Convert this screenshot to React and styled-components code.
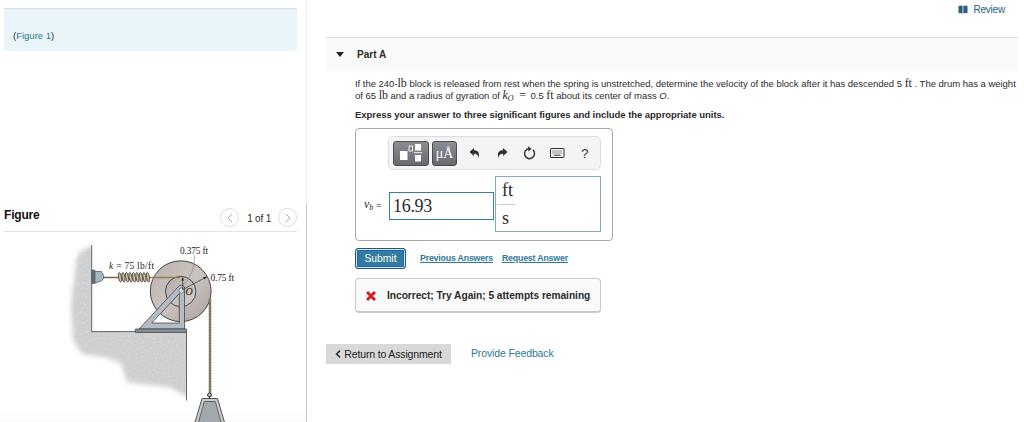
import React from "react";
import styled, { createGlobalStyle } from "styled-components";

const GlobalStyle = createGlobalStyle`
  * { box-sizing: border-box; }
  body { margin: 0; background: #fff; color: #2b2b2b; font-family: "Liberation Sans", Arial, sans-serif; font-size: 9.5px; overflow: hidden; }
`;
const Page = styled.div`display: flex; height: 422px; width: 1024px; overflow: hidden;`;
const Side = styled.aside`width: 307px; flex: none; display: flex; flex-direction: column;`;
const SideTop = styled.div`height: 204px; padding: 8px 9px 0 4px; border-right: 1px solid #ededf7;`;
const SideBottom = styled.div`height: 218px; padding: 0 9px 0 4px; border-right: 1px solid #b4c8da; background: linear-gradient(#fff 93%, #fafafa);`;
const Intro = styled.div`height: 43px; border-top: 1px solid #d9dfe1; background: #e9f5f8; padding: 21px 9px 0; line-height: 12px;`;
const Link = styled.a`color: #2f7896; cursor: pointer;`;
const FigureHead = styled.header`height: 28px; display: flex; align-items: center; justify-content: space-between; border-bottom: 1px solid #e4e4e4;`;
const FigureTitle = styled.h2`margin: 0; padding-bottom: 6px; font-size: 12px; letter-spacing: -0.2px; line-height: 14px; color: #111;`;
const Pager = styled.div`display: flex; align-items: center; gap: 7px; font-size: 10px; letter-spacing: -0.2px; span { padding: 2px 0 0 1px; }`;
const Round = styled.button`width: 19px; height: 19px; border: 1px solid #dedede; border-radius: 50%; background: #fff; padding: 0; display: grid; place-items: center;`;
const Drawing = styled.svg`display: block; margin-left: 56px; font-family: "Liberation Serif", serif;`;

const Main = styled.main`flex: 1; min-width: 0; padding: 0 6px 0 19px;`;
const TopBar = styled.div`height: 37px; display: flex; justify-content: flex-end; padding: 4px 13px 0 0; gap: 5px; color: #24617a; font-size: 10px; letter-spacing: -0.2px; line-height: 12px; svg { margin-top: 1px; }`;
const PartHead = styled.div`height: 34px; border-top: 1px solid #dcdcdc; background: #f9f9f9; display: flex; align-items: center; padding-left: 10px; gap: 13px; font-weight: bold; font-size: 10px; letter-spacing: 0.05px;`;
const Body = styled.section`padding: 7px 0 0 29px; height: 273px;`;
const Line = styled.div`height: ${p => p.$h || 12}px; line-height: 12px; white-space: nowrap; letter-spacing: ${p => p.$ls || 0}px; font-weight: ${p => p.$bold ? "bold" : "normal"};`;
const MathText = styled.span`font-family: "Liberation Serif", serif; font-size: ${p => p.$size || 12}px; line-height: 1px; font-style: ${p => p.$italic ? "italic" : "normal"}; sub { font-size: 8px; line-height: 0; vertical-align: -2px; }`;
const Equals = styled(MathText)`margin: 0 2px 0 3px;`;
const AnswerBox = styled.div`width: 258px; height: 113px; border: 1px solid #a8a8a8; border-radius: 4px; padding: 7px 11px 0 8px;`;
const Toolbar = styled.div`margin-left: 24px; width: 213px; height: 34px; border: 1px solid #dedede; border-radius: 5px; background: #f4f4f4; display: flex; align-items: center; padding: 0 0 0 4px;`;
const Tool = styled.button`width: ${p => p.$w}px; height: 25px; margin-right: ${p => p.$gap || 0}px; padding: 0; border: 1px solid #4b4c50; border-radius: 3px; background: linear-gradient(#8d8e93, #68696e); color: #fff; font: 14px/23px "Liberation Serif", serif; display: grid; place-items: center;`;
const PlainTool = styled.button`width: 27.5px; height: 24px; padding: 0; border: 0; background: none; display: grid; place-items: center; color: #303030; font: 13px "Liberation Sans", sans-serif;`;
const Entry = styled.div`display: flex; align-items: center; height: 56px; margin-top: 6px;`;
const Label = styled.div`width: 25px; white-space: nowrap; font-size: 9.5px; padding-top: 1px;`;
const ValueBox = styled.div`width: 105px; height: 28px; margin-top: 3px; border: 1px solid #38809c; padding-left: 3px; font: 18px/26px "Liberation Serif", serif; letter-spacing: -0.3px;`;
const UnitBox = styled.div`width: 106px; height: 56px; margin-left: 1px; border: 1px solid #7faec4; padding: 0 1px; font: 18px/27px "Liberation Serif", serif;`;
const Num = styled.div`width: 18px; height: 28px; border-bottom: 1px solid #c9c9c9; padding-left: 5px;`;
const Den = styled.div`padding-left: 5px; height: 26px; line-height: 26px;`;
const Actions = styled.div`display: flex; align-items: center; height: 22px; margin-top: 6px;`;
const Submit = styled.button`width: 51px; height: 21px; padding: 0; border: 1px solid #1f5a79; border-radius: 3px; background: #337c9c; box-shadow: inset 0 0 0 1px #d8e8f0, inset 0 0 0 2px #1e60c8; color: #fff; font: 10.3px/19px "Liberation Sans", sans-serif;`;
const ActionLink = styled(Link)`font-weight: bold; font-size: 8.8px; text-decoration: underline; margin-left: ${p => p.$ml}px; letter-spacing: -0.19px; line-height: 12px;`;
const Notice = styled.div`margin-top: 9px; width: 246px; height: 35px; border: 1px solid #c9c9c9; border-bottom-width: 2px; border-radius: 4px; background: #f9f9f9; display: flex; align-items: center; padding: 1px 0 0 10px; gap: 11px; font-size: 10.2px; letter-spacing: -0.03px; font-weight: bold; white-space: nowrap;`;
const Footer = styled.footer`display: flex; align-items: center; gap: 20px; height: 20px; font-size: 10.5px; letter-spacing: -0.13px; ${Link} { padding-bottom: 2px; }`;
const Return = styled.button`width: 125px; height: 20px; border: 0; background: #d8d8d8; padding: 0; display: flex; align-items: center; justify-content: center; gap: 3px; color: #222; font: 10.5px "Liberation Sans", sans-serif; letter-spacing: -0.15px; white-space: nowrap;`;

const Chevron = ({ right }) => (
  <svg width="8" height="10" viewBox="0 0 8 10"><path d={right ? "M2 1l4 4-4 4" : "M6 1L2 5l4 4"} fill="none" stroke="#aaa" strokeWidth="1" /></svg>
);

const coils = Array.from({ length: 9 }, (_, i) => 120 + i * 3.5);

function DrumFigure() {
  return (
    <Drawing width="190" height="190" viewBox="60 232 190 190">
      <defs>
        <filter id="soft" x="-20%" y="-20%" width="140%" height="140%"><feGaussianBlur stdDeviation="2.4" /></filter>
        <filter id="grain"><feTurbulence type="fractalNoise" baseFrequency="0.5" numOctaves="2" /><feColorMatrix values="0 0 0 0 1  0 0 0 0 1  0 0 0 0 1  0 1.6 0 0 -0.72" /><feComposite in2="SourceGraphic" operator="in" /></filter>
        <clipPath id="wallClip"><path d="M60 244H91.5V331.5H186.5V404H60Z" /></clipPath>
        <linearGradient id="metal" x1="0" y1="0" x2="1" y2="1"><stop offset="0" stopColor="#b9b1ad" /><stop offset=".5" stopColor="#cac3bf" /><stop offset="1" stopColor="#aaa29e" /></linearGradient>
        <linearGradient id="hub" x1="0" y1="0" x2="1" y2="1"><stop offset="0" stopColor="#b3aaa6" /><stop offset="1" stopColor="#d6d0cc" /></linearGradient>
      </defs>
      <g clipPath="url(#wallClip)">
        <path filter="url(#soft)" fill="#cdced0" d="M100 244L84 249L77 257L74 280L71 305L73 340L82 354L105 357L121 363L127 382L150 385L170 387L190 398V325H100Z" />
        <path filter="url(#grain)" opacity=".4" d="M91 250L80 255L76 300L76 345L120 360L130 380L170 384L186 390V331H91Z" />
      </g>
      <path d="M91.7 245V331.6H186.5V400.5" fill="none" stroke="#555" strokeWidth=".9" />
      <path d="M92 270h2.8v13.5H92z" fill="#66737f" stroke="#404850" strokeWidth=".6" />
      <path d="M95 271.5H101.5L104.3 277.3L101.5 281L95 283Z" fill="#a6b7c4" stroke="#45505a" strokeWidth=".7" />
      <path d="M103 277.5H120" stroke="#776639" strokeWidth="1.5" />
      <circle cx="180.7" cy="291.2" r="30.4" fill="url(#metal)" stroke="#494442" />
      <circle cx="180.7" cy="291.5" r="15.2" fill="url(#hub)" stroke="#494442" />
      <path d="M148 277.5H180" stroke="#92804c" strokeWidth="1.5" />
      {coils.map(x => <ellipse key={x} cx={x} cy="277.3" rx="1.4" ry="4.8" fill="#c9c2aa" stroke="#514c40" strokeWidth=".9" transform={`rotate(-9 ${x} 277.3)`} />)}
      <path d="M210 298V393" stroke="#655d45" strokeWidth="2.4" />
      <path d="M210 298V393" stroke="#b3aa89" strokeWidth="1" strokeDasharray="2 .7" />
      <path fillRule="evenodd" d="M139 329L178.5 286.5Q181.5 283.5 184.5 287V329ZM151.7 323H179.3V293.5Z" fill="#b3bcc4" stroke="#40464a" strokeWidth=".8" />
      <path d="M135.5 329H186.5V332.4H135.5Z" fill="#899296" stroke="#3d4548" strokeWidth=".8" />
      <circle cx="181.5" cy="290.5" r="2.6" fill="#d9e0e5" stroke="#555f66" strokeWidth=".7" />
      <path d="M194.2 255V264Q193 271 188 280Q186 283 183 284" fill="none" stroke="#8d8a88" strokeWidth=".7" />
      <path d="M182 290L205 277.7M182.7 289V280" stroke="#333" strokeWidth=".7" />
      <path d="M207.3 276.5L203.2 277.3L204.5 279.6ZM182.7 277L181.3 280.5H184.1Z" fill="#222" />
      <circle cx="209.5" cy="395" r="2" fill="#bbb" stroke="#333" strokeWidth="1" />
      <path d="M202 398.5H217.5L225 424H194.5Z" fill="#c5cbc9" stroke="#444" strokeWidth=".9" />
      <path d="M204.3 401.5H215.3L221.5 424H198Z" fill="#a3a8ad" stroke="#4d5153" strokeWidth=".8" />
      <path d="M209.5 396.5V399" stroke="#333" />
      <g fill="#222" fontSize="9.4">
        <text x="180" y="253.7" textLength="28">0.375 ft</text>
        <text x="109" y="268.7" textLength="45"><tspan fontStyle="italic">k</tspan> = 75 lb/ft</text>
        <text x="210.5" y="280.7" textLength="23.5">0.75 ft</text>
        <text x="185.5" y="295.3" fontStyle="italic" fontSize="10">O</text>
      </g>
    </Drawing>
  );
}

export default function App() {
  return (
    <><GlobalStyle />
      <Page>
        <Side>
          <SideTop><Intro>(<Link>Figure 1</Link>)</Intro></SideTop>
          <SideBottom>
            <FigureHead><FigureTitle>Figure</FigureTitle><Pager><Round><Chevron /></Round><span>1 of 1</span><Round><Chevron right /></Round></Pager></FigureHead>
            <DrumFigure />
          </SideBottom>
        </Side>
        <Main>
          <TopBar>
            <svg width="10" height="9" viewBox="0 0 10 9"><path d="M.5 1Q2.5 0 4.6 1V8.5Q2.5 7.5.5 8.2ZM5.4 1Q7.5 0 9.5 1V8.2Q7.5 7.5 5.4 8.5Z" fill="#24617a" /></svg>
            <span>Review</span>
          </TopBar>
          <PartHead><svg width="8" height="5" viewBox="0 0 8 5"><path d="M0 0H8L4 5Z" fill="#222" /></svg>Part A</PartHead>
          <Body>
            <Line $ls={-0.023}>If the 240-<MathText>lb</MathText> block is released from rest when the spring is unstretched, determine the velocity of the block after it has descended 5 <MathText>ft</MathText> . The drum has a weight</Line>
            <Line $h={19} $ls={-0.02}>of 65 <MathText>lb</MathText> and a radius of gyration of <MathText $italic>k<sub>O</sub></MathText> <Equals>=</Equals> 0.5 <MathText>ft</MathText> about its center of mass <i>O</i>.</Line>
            <Line $bold $h={19} $ls={-0.04}>Express your answer to three significant figures and include the appropriate units.</Line>
            <AnswerBox>
              <Toolbar>
                <Tool $w={36} $gap={3}><svg width="24" height="20" viewBox="0 0 24 20"><path d="M1 8h7.5v9H1zM16 1h6v6.5h-6zM16 12h6v6.5h-6z" fill="#fff" /><path d="M10 3h3.5v5H10zM15 9.7h8" fill="none" stroke="#fff" strokeWidth=".9" /></svg></Tool>
                <Tool $w={25} $gap={4}>μÅ</Tool>
                <PlainTool><svg width="12" height="12" viewBox="0 0 12 12"><path d="M0.5 5L5 1V3.3C9 3.3 11 5.5 9.5 11C9 8 7.8 6.7 5 6.8V9Z" fill="#303030" /></svg></PlainTool>
                <PlainTool><svg width="12" height="12" viewBox="0 0 12 12"><path d="M11.5 5L7 1V3.3C3 3.3 1 5.5 2.5 11C3 8 4.2 6.7 7 6.8V9Z" fill="#303030" /></svg></PlainTool>
                <PlainTool><svg width="13" height="14" viewBox="0 0 13 14"><path d="M9.9 3.9A5 5 0 1 1 5.6 2.7" fill="none" stroke="#303030" strokeWidth="1.5" /><path d="M5 0.2L8.6 2.8L5.4 5.4Z" fill="#303030" /></svg></PlainTool>
                <PlainTool><svg width="15" height="10" viewBox="0 0 15 10"><rect x=".5" y=".5" width="13.5" height="9" rx=".6" fill="none" stroke="#303030" /><path d="M2.5 3H12.5M2.5 5H12.5" stroke="#303030" strokeDasharray="1 1" /><path d="M4 7.2H10.5" stroke="#303030" /></svg></PlainTool>
                <PlainTool>?</PlainTool>
              </Toolbar>
              <Entry>
                <Label><MathText $italic $size={12}>v<sub>b</sub></MathText> =</Label>
                <ValueBox>16.93</ValueBox>
                <UnitBox><Num>ft</Num><Den>s</Den></UnitBox>
              </Entry>
            </AnswerBox>
            <Actions><Submit>Submit</Submit><ActionLink $ml={14}>Previous Answers</ActionLink><ActionLink $ml={9}>Request Answer</ActionLink></Actions>
            <Notice><svg width="10" height="10" viewBox="0 0 10 10"><path d="M1 1L9 9M9 1L1 9" stroke="#cf2027" strokeWidth="3" /></svg>Incorrect; Try Again; 5 attempts remaining</Notice>
          </Body>
          <Footer><Return><svg width="6" height="8" viewBox="0 0 6 8"><path d="M5 .6L1.6 4L5 7.4" fill="none" stroke="#333" strokeWidth="1.6" /></svg>Return to Assignment</Return><Link>Provide Feedback</Link></Footer>
        </Main>
      </Page>
    </>
  );
}
